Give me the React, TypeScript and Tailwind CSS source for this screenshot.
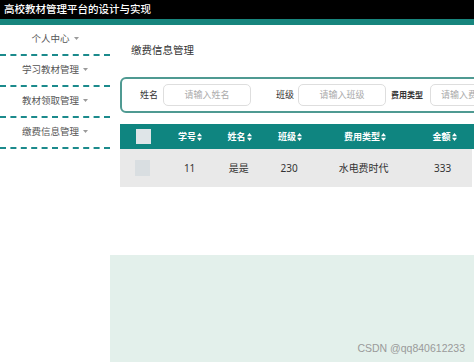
import React from "react";

const Sort = () => (
  <svg width="5" height="8" viewBox="0 0 5 8" className="inline-block ml-[1px]">
    <path d="M2.5 0 L5 3.2 L0 3.2 Z" fill="white" />
    <path d="M2.5 8 L5 4.8 L0 4.8 Z" fill="white" />
  </svg>
);

const Caret = () => (
  <svg width="5" height="4" viewBox="0 0 5 4" className="inline-block ml-[4px] mb-[2px]">
    <path d="M0 0 L5 0 L2.5 3 Z" fill="#9a9a9a" />
  </svg>
);

const menu = ["个人中心", "学习教材管理", "教材领取管理", "缴费信息管理"];

export default function App() {
  const font = { fontFamily: '"Noto Sans", "Noto Sans CJK SC", sans-serif' };
  return (
    <div className="w-[474px] h-[362px] overflow-hidden bg-white relative" style={font}>
      <div className="h-[19px] bg-black text-white text-[10.5px] leading-[19px] pl-[4px] whitespace-nowrap font-medium">
        高校教材管理平台的设计与实现
      </div>
      <div className="h-[6px] bg-[#17857d]" />
      <div className="flex h-[337px]">
        <div className="w-[110px] shrink-0">
          {menu.map((m) => (
            <div
              key={m}
              className="h-[31px] border-b-2 border-dashed border-[#1b8a8c] flex items-center justify-center text-[9.5px] text-[#555] whitespace-nowrap"
            >
              <span>{m}</span>
              <Caret />
            </div>
          ))}
        </div>
        <div className="flex-1 flex flex-col overflow-hidden">
          <div className="h-[52px] shrink-0 flex items-center pl-[21px] text-[10.5px] text-[#333]">缴费信息管理</div>
          <div className="ml-[10px] w-[400px] h-[36px] shrink-0 border-2 border-[#4f9a92] rounded-[6px] flex items-center text-[9px] text-[#333] whitespace-nowrap">
            <span className="ml-[18px] shrink-0">姓名</span>
            <div className="ml-[5px] w-[88px] h-[22px] shrink-0 border border-[#dedede] rounded-[5px] flex items-center justify-center text-[#aaa]">
              请输入姓名
            </div>
            <span className="ml-[25px] shrink-0">班级</span>
            <div className="ml-[4px] w-[88px] h-[22px] shrink-0 border border-[#dedede] rounded-[5px] flex items-center justify-center text-[#aaa]">
              请输入班级
            </div>
            <span className="ml-[5px] shrink-0 text-[8px] font-bold">费用类型</span>
            <div className="ml-[7px] w-[88px] h-[22px] shrink-0 border border-[#dedede] rounded-[5px] flex items-center pl-[10px] text-[#aaa] overflow-hidden">
              请输入费用类型
            </div>
          </div>
          <div className="mt-[11px] ml-[10px] text-[9px] shrink-0 whitespace-nowrap">
            <div className="h-[25px] bg-[#0f8580] flex items-center text-white font-bold">
              <div className="w-[46px] flex justify-center">
                <div className="w-[15px] h-[15px] bg-[#dfe5e8]" />
              </div>
              <div className="w-[48px] text-center">学号<Sort /></div>
              <div className="w-[51px] text-center">姓名<Sort /></div>
              <div className="w-[50px] text-center">班级<Sort /></div>
              <div className="w-[100px] text-center">费用类型<Sort /></div>
              <div className="w-[59px] text-center">金额<Sort /></div>
            </div>
            <div className="h-[38px] bg-[#e9e9e9] mr-[2px] flex items-center text-[#333] text-[10px]">
              <div className="w-[46px] flex justify-center">
                <div className="w-[15px] h-[16px] bg-[#d9dee1]" />
              </div>
              <div className="w-[48px] text-center">11</div>
              <div className="w-[51px] text-center">是是</div>
              <div className="w-[50px] text-center">230</div>
              <div className="w-[100px] text-center">水电费时代</div>
              <div className="w-[59px] text-center">333</div>
            </div>
          </div>
          <div className="mt-[68px] flex-1 bg-[#e3f0eb] relative">
            <span
              className="absolute right-[9px] bottom-[5px] text-[10.5px] text-[#9a9a9a] whitespace-nowrap"
              style={{ fontFamily: '"Liberation Sans", sans-serif' }}
            >
              CSDN @qq840612233
            </span>
          </div>
        </div>
      </div>
    </div>
  );
}
